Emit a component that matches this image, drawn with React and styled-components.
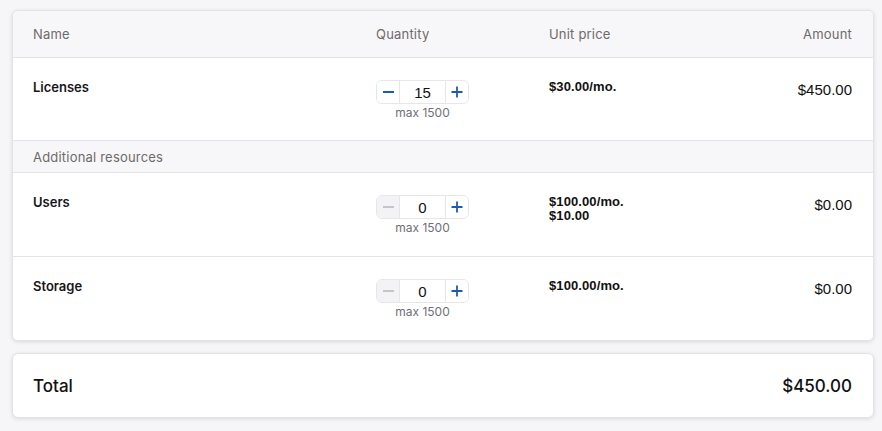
import React from 'react';
import styled, { createGlobalStyle } from 'styled-components';

const GlobalStyle = createGlobalStyle`
  body {
    margin: 0;
    background: #f6f6f8;
    font-family: Inter, "Noto Sans", sans-serif;
    color: #16161a;
  }
`;

const Page = styled.div`
  padding: 10px 8px 14px 12px;
  display: flex;
  flex-direction: column;
  gap: 12px;
`;

const Card = styled.div`
  background: #fff;
  border: 1px solid #e3e3e7;
  border-radius: 6px;
  box-shadow: 0 1px 4px rgba(0, 0, 0, 0.12);
  overflow: hidden;
`;

const Row = styled.div`
  display: grid;
  grid-template-columns: 343px 173px 1fr 160px;
  padding: ${p => p.$pad || '0'};
  padding-left: 20px;
  padding-right: 21px;
  min-height: ${p => p.$h || 0}px;
  box-sizing: border-box;
  background: ${p => (p.$muted ? '#f7f7f9' : '#fff')};
  border-bottom: ${p => (p.$last ? 'none' : '1px solid #e4e4e8')};
  align-items: ${p => p.$center ? 'center' : 'start'};
`;

const HeadCell = styled.div`
  font-size: 13px;
  color: #6e6a6a;
  letter-spacing: 0.2px;
  text-align: ${p => (p.$right ? 'right' : 'left')};
`;

const Name = styled.div`
  font-size: 13px;
  font-weight: 600;
  line-height: 18px;
  padding-top: 1px;
`;

const Stepper = styled.div`
  display: flex;
  flex-direction: column;
  align-items: center;
  width: 93px;
  margin-top: 3px;
`;

const Box = styled.div`
  display: flex;
  height: 24px;
  width: 93px;
  box-sizing: border-box;
  border: 1px solid #e6e6ea;
  border-radius: 6px;
  overflow: hidden;
`;

const StepBtn = styled.div`
  width: 22px;
  display: flex;
  align-items: center;
  justify-content: center;
  background: ${p => (p.$disabled ? '#f3f3f5' : '#fff')};
  color: ${p => (p.$disabled ? '#c4c4ca' : '#1d5bb0')};
  border-${p => (p.$side === 'left' ? 'right' : 'left')}: 1px solid #e6e6ea;
`;

const Value = styled.div`
  flex: 1;
  display: flex;
  align-items: center;
  justify-content: center;
  font-family: "Liberation Sans", Arial, sans-serif;
  font-size: 15px;
  color: #111;
`;

const Max = styled.div`
  font-size: 12px;
  color: #6f6f78;
  margin-top: 1px;
  line-height: 16px;
`;

const Price = styled.div`
  font-family: "Liberation Sans", Arial, sans-serif;
  font-size: 13px;
  font-weight: 700;
  line-height: 14px;
  padding-top: 3px;
  letter-spacing: 0.1px;
  color: #111;
`;

const Amount = styled.div`
  font-family: "Liberation Sans", Arial, sans-serif;
  font-size: 15px;
  line-height: 18px;
  text-align: right;
  padding-top: 4px;
  color: #111;
`;

const TotalRow = styled.div`
  display: flex;
  justify-content: space-between;
  align-items: center;
  height: 63px;
  padding: 0 21px 0 20px;
  font-size: 17px;
  font-weight: 500;
  color: #111;
`;

const Minus = () => (
  <svg width="13" height="12" viewBox="0 0 13 12">
    <path d="M1 6h11" stroke="currentColor" strokeWidth="1.8" />
  </svg>
);

const Plus = () => (
  <svg width="12" height="12" viewBox="0 0 12 12">
    <path d="M0.5 6h11M6 0.5v11" stroke="currentColor" strokeWidth="1.8" />
  </svg>
);

const Qty = ({ value }) => (
  <Stepper>
    <Box>
      <StepBtn $side="left" $disabled={value === 0}><Minus /></StepBtn>
      <Value>{value}</Value>
      <StepBtn $side="right"><Plus /></StepBtn>
    </Box>
    <Max>max 1500</Max>
  </Stepper>
);

const items = [
  { name: 'Licenses', qty: 15, price: ['$30.00/mo.'], amount: '$450.00', h: 83 },
];

const extras = [
  { name: 'Users', qty: 0, price: ['$100.00/mo.', '$10.00'], amount: '$0.00', h: 84 },
  { name: 'Storage', qty: 0, price: ['$100.00/mo.'], amount: '$0.00', h: 83 },
];

const Line = ({ item, last }) => (
  <Row $pad="19px 0 0" $h={item.h} $last={last}>
    <Name>{item.name}</Name>
    <Qty value={item.qty} />
    <Price>
      {item.price.map(p => <div key={p}>{p}</div>)}
    </Price>
    <Amount>{item.amount}</Amount>
  </Row>
);

export default function App() {
  return (
    <Page>
      <GlobalStyle />
      <Card>
        <Row $muted $center $h={47}>
          <HeadCell>Name</HeadCell>
          <HeadCell>Quantity</HeadCell>
          <HeadCell>Unit price</HeadCell>
          <HeadCell $right>Amount</HeadCell>
        </Row>
        {items.map(i => <Line key={i.name} item={i} />)}
        <Row $muted $center $h={32}>
          <HeadCell>Additional resources</HeadCell>
        </Row>
        {extras.map((i, n) => <Line key={i.name} item={i} last={n === extras.length - 1} />)}
      </Card>
      <Card>
        <TotalRow>
          <span>Total</span>
          <span>$450.00</span>
        </TotalRow>
      </Card>
    </Page>
  );
}
